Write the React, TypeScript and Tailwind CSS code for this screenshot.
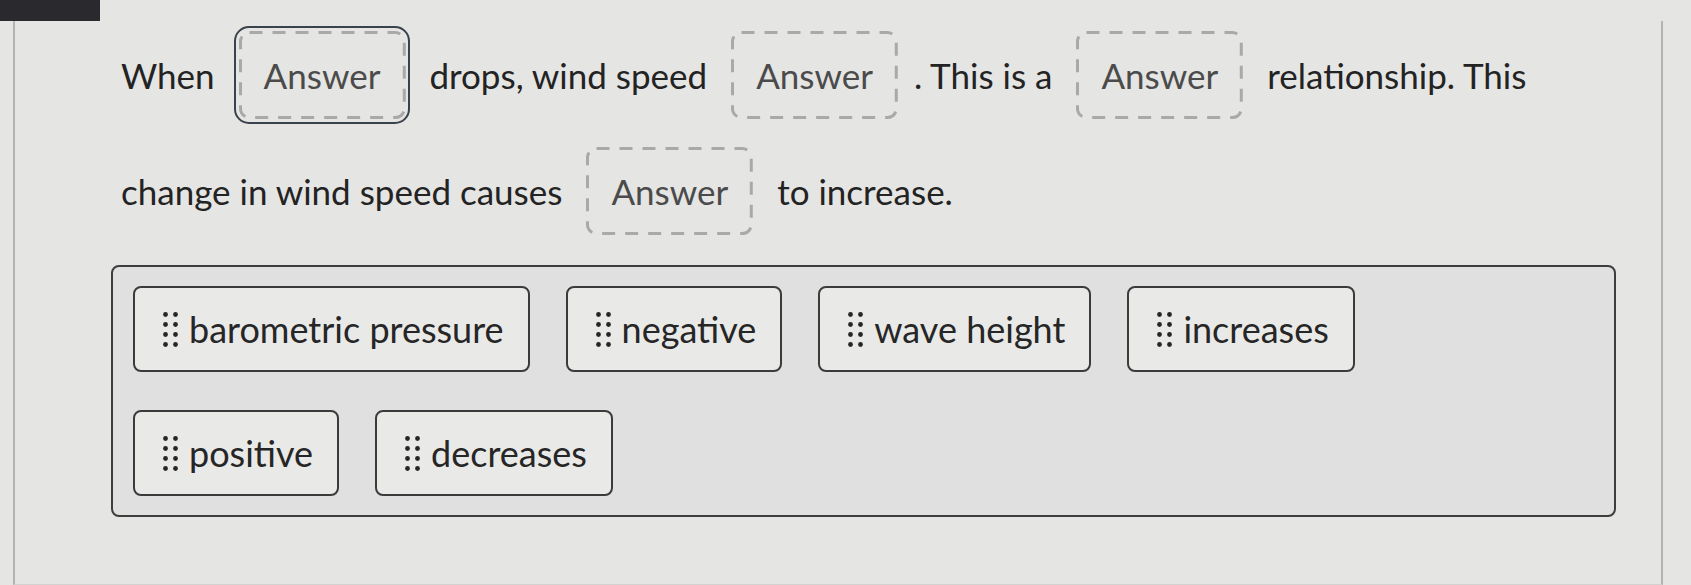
import type { ReactNode } from 'react';

const chipsTop = ['barometric pressure', 'negative', 'wave height', 'increases'];
const chipsBottom = ['positive', 'decreases'];

function DragDots() {
  const cols = [2.5, 12.5];
  const rows = [2.5, 12.5, 22.5, 32.5];
  return (
    <svg width="15" height="35" viewBox="0 0 15 35" className="shrink-0">
      {rows.map((cy) =>
        cols.map((cx) => <circle key={`${cx}-${cy}`} cx={cx} cy={cy} r="2.4" fill="#262626" />)
      )}
    </svg>
  );
}

// dashed drop target; the dash pattern is drawn with an svg rect so the dashes come out long
function AnswerSlot({ focused }: { focused?: boolean }) {
  return (
    <div
      className={`relative mx-6 rounded-[10px] px-[25px] py-[24px] text-[#4b4b4b] leading-[40px] ${
        focused ? 'outline-2 outline-offset-[3px] outline-[#3a424d]' : ''
      }`}
    >
      <svg className="pointer-events-none absolute inset-0 h-full w-full overflow-visible">
        <rect
          x="1.5"
          y="1.5"
          width="calc(100% - 3px)"
          height="calc(100% - 3px)"
          rx="9"
          fill="none"
          stroke="#a9a9a9"
          strokeWidth="3"
          strokeDasharray="13 10"
        />
      </svg>
      Answer
    </div>
  );
}

function Chip({ label }: { label: string }) {
  return (
    <div className="flex h-[86px] items-center gap-[11px] rounded-lg border-2 border-[#3b3b3b] bg-[#e9e9e8] pl-7 pr-6 text-[36px] text-[#262626]">
      <DragDots />
      <span className="leading-[40px]">{label}</span>
    </div>
  );
}

function Line({ children, className = '' }: { children: ReactNode; className?: string }) {
  return <div className={`flex items-center text-[#232323] ${className}`}>{children}</div>;
}

export default function App() {
  return (
    <div className="flex h-[585px] w-[1691px] flex-col overflow-hidden bg-[#e5e5e3] font-['Lato',sans-serif] text-[35px]">
      <div className="flex h-[21px] shrink-0">
        <div className="w-[100px] bg-[#2a292d]" />
      </div>
      <div className="flex flex-1">
        <div className="w-[13px] shrink-0" />
        <main className="flex w-[1650px] flex-col border-x-2 border-b border-x-[#b3b3b1] border-b-[#d2d2d0] pl-[96px] pt-[10px]">
          <Line className="pl-[10px]">
            <span>When</span>
            <AnswerSlot focused />
            <span>drops, wind speed</span>
            <AnswerSlot />
            <span className="-ml-[8px]">. This is a</span>
            <AnswerSlot />
            <span>relationship. This</span>
          </Line>
          <Line className="mt-[28px] pl-[10px]">
            <span>change in wind speed causes</span>
            <AnswerSlot />
            <span>to increase.</span>
          </Line>
          <section className="mt-[30px] flex h-[252px] w-[1505px] flex-col gap-[38px] rounded-lg border-2 border-[#3d3d3d] bg-[#dfe0df] px-[20px] py-[19px]">
            <div className="flex gap-[36px]">
              {chipsTop.map((c) => (
                <Chip key={c} label={c} />
              ))}
            </div>
            <div className="flex gap-[36px]">
              {chipsBottom.map((c) => (
                <Chip key={c} label={c} />
              ))}
            </div>
          </section>
        </main>
      </div>
    </div>
  );
}
